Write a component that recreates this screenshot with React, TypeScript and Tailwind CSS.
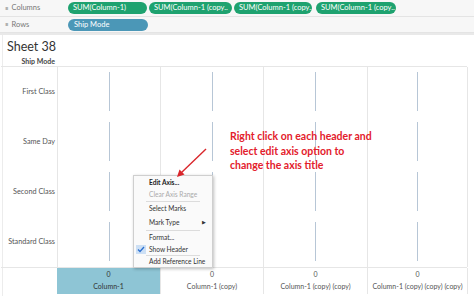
import React from "react";

const font = { fontFamily: "Lato, 'Open Sans', sans-serif" };

const panes = [
  { w: "w-[103px]", label: "Column-1" },
  { w: "w-[103px]", label: "Column-1 (copy)" },
  { w: "w-[104px]", label: "Column-1 (copy) (copy)" },
  { w: "w-[101px]", label: "Column-1 (copy) (copy) (copy)" },
];
const rows = ["First Class", "Same Day", "Second Class", "Standard Class"];

function Menu() {
  const Item = ({ h, children, cls = "" }: { h: string; children: React.ReactNode; cls?: string }) => (
    <div className={`${h} flex items-center pl-[15px] pr-[6px] text-[6.6px] whitespace-nowrap ${cls}`}>{children}</div>
  );
  const Sep = () => <div className="h-px bg-[#dcdcdc] mx-[12px]" />;
  return (
    <div className="absolute left-[133px] top-[175px] w-[80px] h-[93px] bg-[#fafafa] border border-[#cfcfcf] shadow-[1px_1px_3px_rgba(0,0,0,0.25)] pt-px text-[#333]">
      <Item h="h-[12px]" cls="font-bold text-[#222]">Edit Axis...</Item>
      <Item h="h-[12px]" cls="text-[#aaa]">Clear Axis Range</Item>
      <Sep />
      <Item h="h-[14px]">Select Marks</Item>
      <Item h="h-[14px]">
        <span className="flex-1">Mark Type</span>
        <span className="text-[5px]">▶</span>
      </Item>
      <Sep />
      <Item h="h-[13px]">Format...</Item>
      <div className="h-[11px] flex items-center text-[6.6px] whitespace-nowrap relative pl-[15px]">
        <div className="absolute left-[2px] top-[1px] w-[10px] h-[9px] bg-[#cde0f5] flex items-center justify-center">
          <svg width="8" height="7" viewBox="0 0 8 7">
            <path d="M1 3.5 L3 5.5 L7 1" stroke="#2a6fd0" strokeWidth="1.3" fill="none" />
          </svg>
        </div>
        Show Header
      </div>
      <Sep />
      <Item h="h-[12px]">Add Reference Line</Item>
    </div>
  );
}

const pill = "h-[12px] rounded-full bg-[#1ea26f] text-white text-[7.5px] flex items-center pl-[5px] whitespace-nowrap overflow-hidden";

export default function App() {
  return (
    <div className="w-[474px] h-[296px] bg-white overflow-hidden relative text-[#333]" style={font}>
      {/* Shelves */}
      <div className="h-[17px] flex items-center bg-[#f7f7f7] border-b border-[#e4e4e4]">
        <div className="w-[68px] flex items-center pl-[5px] gap-[3px] text-[7.5px] text-[#777]">
          <span className="text-[6px]">≡</span>
          <span>Columns</span>
        </div>
        <div className="flex gap-[2px]">
          <div className={`w-[79px] ${pill}`}>SUM(Column-1)</div>
          <div className={`w-[83px] ${pill}`}>SUM(Column-1 (copy..</div>
          <div className={`w-[78px] ${pill}`}>SUM(Column-1 (copy..</div>
          <div className={`w-[80px] ml-[2px] ${pill}`}>SUM(Column-1 (copy..</div>
        </div>
      </div>
      <div className="h-[16px] flex items-center bg-[#f7f7f7] border-b border-[#e4e4e4]">
        <div className="w-[68px] flex items-center pl-[5px] gap-[3px] text-[7.5px] text-[#777]">
          <span className="text-[6px]">≡</span>
          <span>Rows</span>
        </div>
        <div className="w-[80px] h-[12px] rounded-full bg-[#4b97b7] text-white text-[7.5px] flex items-center pl-[6px] whitespace-nowrap">Ship Mode</div>
      </div>
      <div className="h-[2px] bg-[#e9e9e9]" />

      {/* Sheet */}
      <div className="ml-[2px] border-l border-[#ececec] h-[261px]">
        <div className="h-[21px] pl-[4px] pt-[5px] text-[12.5px] leading-[14px] text-[#333]">Sheet 38</div>
        <div className="h-[10px] w-[52px] text-right font-bold text-[7px] leading-[10px] text-[#444]">Ship Mode</div>
        <div className="h-px bg-[#e6e6e6] w-[466px] -ml-[2px]" />
        <div className="flex">
          <div className="w-[54px] flex flex-col pr-[2px]">
            {rows.map((r) => (
              <div key={r} className="h-[50px] flex items-center justify-end text-[7.3px] text-[#555] whitespace-nowrap">{r}</div>
            ))}
          </div>
          {panes.map((p, i) => (
            <div key={i} className={`${p.w} border-l border-[#e6e6e6] ${i === 3 ? "border-r" : ""} flex flex-col`}>
              {rows.map((r) => (
                <div key={r} className="h-[50px] flex justify-center pt-[5px] pb-[6px]">
                  <div className="w-px bg-[#b7c6d6]" />
                </div>
              ))}
            </div>
          ))}
        </div>
        <div className="h-px bg-[#e6e6e6] w-[466px] -ml-[2px]" />
        <div className="flex">
          <div className="w-[54px]" />
          {panes.map((p, i) => (
            <div key={i} className={`${p.w} h-[26px] flex flex-col items-center text-[7px] ${i === 0 ? "bg-[#8ec5d5] text-[#333]" : "border-l border-[#e6e6e6] text-[#555]"} ${i === 3 ? "border-r" : ""}`}>
              <div className="leading-[8px] mt-[2px]">0</div>
              <div className="leading-[8px] mt-[4px] whitespace-nowrap">{p.label}</div>
            </div>
          ))}
        </div>
      </div>

      {/* Overlays */}
      <Menu />
      <svg className="absolute left-0 top-0 pointer-events-none" width="474" height="296">
        <line x1="206" y1="149" x2="181" y2="173" stroke="#d9262b" strokeWidth="1.4" />
        <path d="M177 177 L179.5 169.5 L184.5 174.5 Z" fill="#d9262b" />
      </svg>
      <div className="absolute left-[230px] top-[129px] text-[10.5px] leading-[14.5px] font-bold text-[#e3202b] whitespace-nowrap">
        <div>Right click on each header and</div>
        <div>select edit axis option to</div>
        <div>change the axis title</div>
      </div>
    </div>
  );
}
